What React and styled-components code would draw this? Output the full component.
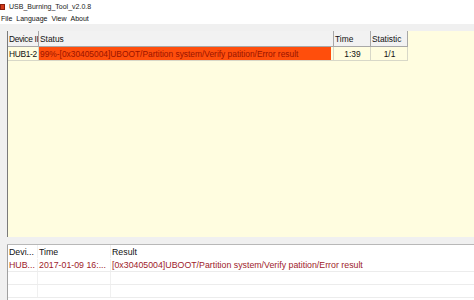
import React from "react";
import styled, { createGlobalStyle } from "styled-components";

const GlobalStyle = createGlobalStyle`
  html, body {
    margin: 0;
    padding: 0;
    background: #f0f0f0;
  }
`;

const Window = styled.div`
  display: flex;
  flex-direction: column;
  width: 474px;
  height: 300px;
  overflow: hidden;
  font-family: "Liberation Sans", Arial, sans-serif;
  background: #f0f0f0;
`;

const TitleBar = styled.div`
  display: flex;
  align-items: center;
  gap: 4px;
  height: 13px;
  background: #ffffff;
  font-size: 7px;
  color: #222;
`;

const AppIcon = styled.div`
  width: 5px;
  height: 6px;
  background: #d23a1a;
  border: 1px solid #8a1d0c;
  box-sizing: border-box;
`;

const MenuBar = styled.div`
  display: flex;
  align-items: center;
  gap: 4px;
  height: 11px;
  padding-left: 1px;
  background: #ffffff;
  font-size: 7px;
  color: #111;
`;

const Body = styled.div`
  flex: 1;
  display: flex;
  flex-direction: column;
  padding: 7px 0 0 7px;
`;

const UpperGrid = styled.div`
  height: 206px;
  background: #fffde0;
  border-left: 1px solid #7a7a7a;
  font-size: 8.4px;
`;

const Row = styled.div`
  display: flex;
  height: ${p => p.$h}px;
`;

const Cell = styled.div`
  box-sizing: border-box;
  width: ${p => p.$w}px;
  display: flex;
  align-items: center;
  justify-content: ${p => (p.$center ? "center" : "flex-start")};
  padding-left: 1px;
  white-space: nowrap;
  overflow: hidden;
  letter-spacing: ${p => (p.$tight ? "-0.35px" : "normal")};
  border-right: 1px solid ${p => (p.$head ? "#a8a8a8" : "#d8d8c8")};
  border-bottom: 1px solid ${p => (p.$head ? "#a8a8a8" : "#d8d8c8")};
  background: ${p => (p.$head ? "#f2f2f2" : "transparent")};
  color: #111;
`;

const StatusCell = styled(Cell)`
  padding: 0 2px 0 0;
  border-color: #d8d8c8;
`;

const StatusBar = styled.div`
  flex: 1;
  align-self: stretch;
  display: flex;
  align-items: center;
  padding-left: 1px;
  background: #ff4e0c;
  color: #9a1400;
`;

const Splitter = styled.div`
  height: 7px;
  border-bottom: 1px solid #b8b8b8;
`;

const LowerList = styled.div`
  flex: 1;
  background: #ffffff;
  border-left: 1px solid #a0a0a0;
  font-size: 8.8px;
`;

const ListRow = styled.div`
  display: flex;
  height: ${p => p.$h}px;
  border-bottom: 1px solid ${p => (p.$line ? "#ececec" : "transparent")};
  color: ${p => (p.$error ? "#9e1b2a" : "#111")};
`;

const ListCell = styled.div`
  box-sizing: border-box;
  width: ${p => p.$w}px;
  flex: ${p => (p.$grow ? 1 : "none")};
  display: flex;
  align-items: center;
  padding-left: 1px;
  white-space: nowrap;
  overflow: hidden;
  border-right: 1px solid ${p => (p.$div ? "#f0f0f0" : "transparent")};
`;

const message = "[0x30405004]UBOOT/Partition system/Verify patition/Error result";

export default function App() {
  return (
    <>
      <GlobalStyle />
      <Window>
        <TitleBar>
          <AppIcon />
          <span>USB_Burning_Tool_v2.0.8</span>
        </TitleBar>
        <MenuBar>
          <span>File</span>
          <span>Language</span>
          <span>View</span>
          <span>About</span>
        </MenuBar>
        <Body>
          <UpperGrid>
            <Row $h={16}>
              <Cell $head $tight $w={31}>Device II</Cell>
              <Cell $head $w={295}>Status</Cell>
              <Cell $head $w={37}>Time</Cell>
              <Cell $head $w={37}>Statistic</Cell>
            </Row>
            <Row $h={14}>
              <Cell $tight $w={31}>HUB1-2</Cell>
              <StatusCell $w={295}>
                <StatusBar>99%-{message}</StatusBar>
              </StatusCell>
              <Cell $w={37} $center>1:39</Cell>
              <Cell $w={37} $center>1/1</Cell>
            </Row>
          </UpperGrid>
          <Splitter />
          <LowerList>
            <ListRow $h={13}>
              <ListCell $w={30} $div>Devi...</ListCell>
              <ListCell $w={73} $div>Time</ListCell>
              <ListCell $grow>Result</ListCell>
            </ListRow>
            <ListRow $h={12} $line $error>
              <ListCell $w={30} $div>HUB...</ListCell>
              <ListCell $w={73} $div>2017-01-09 16:...</ListCell>
              <ListCell $grow>{message}</ListCell>
            </ListRow>
            <ListRow $h={12} $line>
              <ListCell $w={30} $div />
              <ListCell $w={73} $div />
              <ListCell $grow />
            </ListRow>
            <ListRow $h={12} $line>
              <ListCell $w={30} $div />
              <ListCell $w={73} $div />
              <ListCell $grow />
            </ListRow>
          </LowerList>
        </Body>
      </Window>
    </>
  );
}
